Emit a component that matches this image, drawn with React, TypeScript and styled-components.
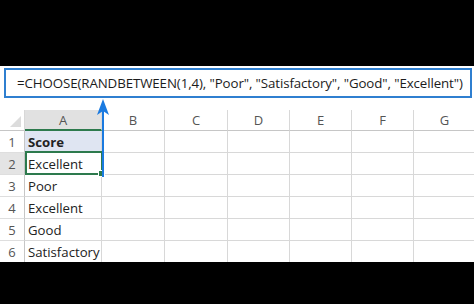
import { Fragment } from 'react';
import styled, { createGlobalStyle } from 'styled-components';

const GlobalStyle = createGlobalStyle`
  html, body {
    margin: 0;
    padding: 0;
    background: #000;
  }
  body {
    width: 474px;
    height: 304px;
    overflow: hidden;
    font-family: "Open Sans", "Noto Sans", sans-serif;
  }
`;

const Page = styled.div`
  width: 474px;
  height: 304px;
  display: flex;
  flex-direction: column;
  background: #000;
`;

const Shot = styled.div`
  margin-top: 66px;
  height: 196px;
  background: #fff;
  position: relative;
  overflow: hidden;
`;

const FormulaBox = styled.div`
  margin: 2px 2px 0 4px;
  height: 30px;
  box-sizing: border-box;
  border: 2px solid #2f7fd0;
  display: flex;
  align-items: center;
  padding-left: 11px;
  font-size: 13.3px;
  color: #1c1c1c;
  white-space: nowrap;
  letter-spacing: -0.1px;
`;

const Grid = styled.div`
  margin-top: 12px;
  display: grid;
  grid-template-columns: 25px 77px 63px 63px 62px 62px 62px 62px;
  grid-template-rows: 21px repeat(6, 22px);
`;

const Corner = styled.div`
  position: relative;
  border-bottom: 1px solid #c6c6c6;
  border-right: 1px solid #d8d8d8;
  &::after {
    content: "";
    position: absolute;
    right: 3px;
    bottom: 3px;
    width: 0;
    height: 0;
    border-left: 11px solid transparent;
    border-bottom: 11px solid #dcdcdc;
  }
`;

const ColHead = styled.div<{ $active?: boolean }>`
  display: flex;
  align-items: center;
  justify-content: center;
  font-size: 13px;
  color: #555;
  background: ${(p) => (p.$active ? '#e1e1e1' : '#fff')};
  border-right: 1px solid #d8d8d8;
  border-bottom: ${(p) => (p.$active ? '2px solid #2d7a4d' : '1px solid #c6c6c6')};
`;

const RowHead = styled.div<{ $active?: boolean }>`
  display: flex;
  align-items: center;
  justify-content: center;
  font-size: 13px;
  color: #555;
  background: ${(p) => (p.$active ? '#e4e4e4' : '#fff')};
  border-right: 1px solid #c6c6c6;
  border-bottom: 1px solid #dedede;
`;

const Cell = styled.div<{ $bold?: boolean; $fill?: string }>`
  display: flex;
  align-items: center;
  padding-left: 3px;
  font-size: 13.2px;
  color: #222;
  white-space: nowrap;
  font-weight: ${(p) => (p.$bold ? 700 : 400)};
  background: ${(p) => p.$fill || '#fff'};
  border-right: 1px solid #d8d8d8;
  border-bottom: 1px solid #d8d8d8;
`;

const Selection = styled.div`
  position: absolute;
  left: 25px;
  top: 85px;
  width: 78px;
  height: 24px;
  box-sizing: border-box;
  border: 2px solid #2d7a4d;
  &::after {
    content: "";
    position: absolute;
    right: -4px;
    bottom: -4px;
    width: 5px;
    height: 5px;
    background: #2d7a4d;
    border: 1px solid #fff;
  }
`;

const Arrow = styled.svg`
  position: absolute;
  left: 96px;
  top: 33px;
`;

const cols = ['A', 'B', 'C', 'D', 'E', 'F', 'G'];
const values = ['Score', 'Excellent', 'Poor', 'Excellent', 'Good', 'Satisfactory'];

export default function App() {
  return (
    <Page>
      <GlobalStyle />
      <Shot>
        <FormulaBox>
          =CHOOSE(RANDBETWEEN(1,4), "Poor", "Satisfactory", "Good", "Excellent")
        </FormulaBox>
        <Grid>
          <Corner />
          {cols.map((c) => (
            <ColHead key={c} $active={c === 'A'}>
              {c}
            </ColHead>
          ))}
          {values.map((v, i) => (
            <Fragment key={i}>
              <RowHead $active={i === 1}>{i + 1}</RowHead>
              <Cell $bold={i === 0} $fill={i === 0 ? '#dfe5f2' : undefined}>
                {v}
              </Cell>
              {cols.slice(1).map((c) => (
                <Cell key={c} />
              ))}
            </Fragment>
          ))}
        </Grid>
        <Selection />
        <Arrow width="14" height="78" viewBox="0 0 14 78">
          <line x1="7" y1="10" x2="7" y2="78" stroke="#1a7ae0" strokeWidth="2" />
          <path d="M7 0 L13 16 L7 12 L1 16 Z" fill="#1a7ae0" />
        </Arrow>
      </Shot>
    </Page>
  );
}
